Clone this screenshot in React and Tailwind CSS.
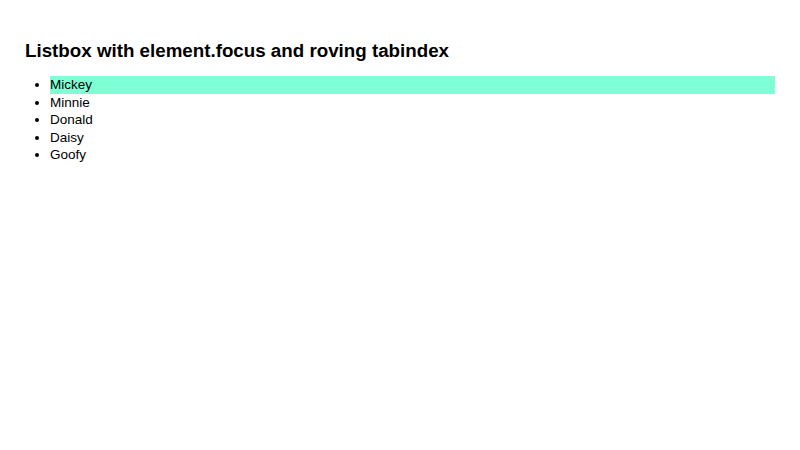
import React, { useState } from 'react';

const names = ['Mickey', 'Minnie', 'Donald', 'Daisy', 'Goofy'];

export default function App() {
  const [active, setActive] = useState(0);

  return (
    <div className="min-h-[450px] bg-white p-[25px] text-black font-['Liberation_Sans',Arial,sans-serif]">
      <h2 className="mt-[15px] mb-[14px] text-[18.75px] font-bold leading-[22px]">
        Listbox with element.focus and roving tabindex
      </h2>
      <ul role="listbox" className="list-disc pl-[25px] text-[13.5px] leading-[17.5px]">
        {names.map((name, i) => (
          <li
            key={name}
            role="option"
            tabIndex={i === active ? 0 : -1}
            aria-selected={i === active}
            onClick={() => setActive(i)}
            className={i === active ? 'bg-[#7fffd4] outline-none' : 'outline-none'}
          >
            {name}
          </li>
        ))}
      </ul>
    </div>
  );
}
